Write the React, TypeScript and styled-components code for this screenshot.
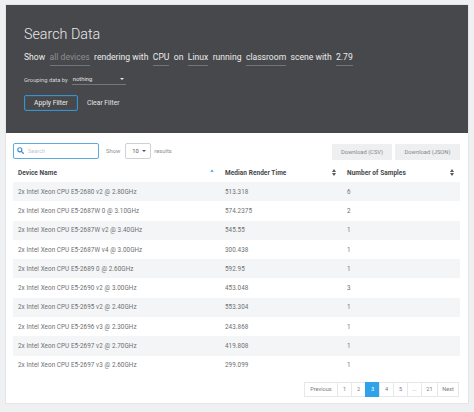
import React from "react";
import styled, { createGlobalStyle } from "styled-components";

const Global = createGlobalStyle`
  html, body { margin: 0; padding: 0; background: #eef0f2; }
  body { font-family: Roboto, "Liberation Sans", Arial, sans-serif; }
  * { box-sizing: border-box; }
`;

const Page = styled.div`
  padding: 4px 5px 10px 5px;
`;

const Card = styled.div`
  width: 464px;
  background: #ffffff;
  border: 1px solid #e3e5e8;
`;

const Header = styled.div`
  background: #47484b;
  padding: 19px 18px 20px 18px;
  height: 128px;
  display: flex;
  flex-direction: column;
`;

const Title = styled.h1`
  margin: 0;
  font-size: 14.3px;
  line-height: 20px;
  font-weight: 300;
  color: #e9e9ea;
`;

const Sentence = styled.div`
  margin-top: 7px;
  display: flex;
  align-items: flex-start;
  gap: 4.4px;
  font-size: 8.6px;
  line-height: 12px;
  color: #ececec;
`;

const Word = styled.span``;

const Pick = styled.span<{ $muted?: boolean }>`
  padding-bottom: 2px;
  border-bottom: 1px solid #74757a;
  color: ${(p) => (p.$muted ? "#8e8f93" : "#ececec")};
`;

const GroupRow = styled.div`
  margin-top: 7px;
  display: flex;
  align-items: flex-end;
  gap: 4px;
  font-size: 5.8px;
  color: #d6d6d8;
`;

const GroupLabel = styled.span`
  line-height: 10px;
`;

const GroupSelect = styled.div`
  width: 54px;
  height: 12px;
  display: flex;
  align-items: center;
  justify-content: space-between;
  padding: 0 2px 0 1px;
  border-bottom: 1px solid #76777b;
  color: #e4e4e4;
`;

const Caret = styled.span<{ $color?: string }>`
  width: 0;
  height: 0;
  border-left: 2px solid transparent;
  border-right: 2px solid transparent;
  border-top: 2.5px solid ${(p) => p.$color || "#e8e8e8"};
`;

const ButtonRow = styled.div`
  margin-top: 10px;
  display: flex;
  align-items: center;
  gap: 9px;
`;

const ApplyButton = styled.button`
  width: 54px;
  height: 16px;
  padding: 0;
  border: 1px solid #3f8fc8;
  box-shadow: inset 0 0 0 1px #3b5566;
  border-radius: 2px;
  background: transparent;
  color: #ececec;
  font-family: inherit;
  font-size: 6.8px;
`;

const ClearButton = styled.button`
  border: none;
  background: transparent;
  padding: 0;
  color: #e2e2e2;
  font-family: inherit;
  font-size: 6.8px;
`;

const Body = styled.div`
  padding: 9px 8px 6px 7px;
  display: flex;
  flex-direction: column;
`;

const Toolbar = styled.div`
  display: flex;
  align-items: center;
  height: 17px;
`;

const SearchBox = styled.div`
  width: 86px;
  height: 16px;
  border: 1px solid #5ea9dd;
  border-radius: 2px;
  display: flex;
  align-items: center;
  gap: 4px;
  padding-left: 3px;
  font-size: 5.6px;
  color: #c3c6c9;
`;

const ShowLabel = styled.span`
  margin-left: 7px;
  font-size: 5.8px;
  color: #8d8f92;
`;

const CountSelect = styled.div`
  margin-left: 5px;
  width: 26px;
  height: 16px;
  border: 1px solid #cfd2d5;
  border-radius: 2px;
  display: flex;
  align-items: center;
  justify-content: space-between;
  padding: 0 4px 0 6px;
  font-size: 5.8px;
  color: #555;
`;

const ResultsLabel = styled.span`
  margin-left: 3px;
  font-size: 5.8px;
  color: #8d8f92;
`;

const Spacer = styled.div`
  flex: 1;
`;

const DownloadButton = styled.button<{ $w: number }>`
  width: ${(p) => p.$w}px;
  height: 16px;
  margin-left: 3px;
  border: none;
  border-radius: 1px;
  background: #eeeff0;
  color: #85878a;
  font-family: inherit;
  font-size: 5.8px;
  padding: 0;
  margin-top: 2px;
`;

const Table = styled.div`
  margin-top: 4px;
  width: 447px;
  display: flex;
  flex-direction: column;
`;

const HeadRow = styled.div`
  display: grid;
  grid-template-columns: 207px 122px 118px;
  height: 19px;
  align-items: center;
`;

const HeadCell = styled.div`
  display: flex;
  align-items: center;
  justify-content: space-between;
  padding: 0 6px 0 5px;
  font-size: 6.5px;
  font-weight: 700;
  letter-spacing: 0.05px;
  color: #45474a;
`;

const Row = styled.div<{ $striped: boolean }>`
  display: grid;
  grid-template-columns: 207px 122px 118px;
  height: 19.3px;
  align-items: center;
  background: ${(p) => (p.$striped ? "#f4f5f6" : "#ffffff")};
`;

const Cell = styled.div`
  padding-left: 5px;
  font-size: 6.3px;
  letter-spacing: 0.08px;
  color: #6d6f72;
  white-space: nowrap;
`;

const Pager = styled.div`
  margin-top: 7px;
  align-self: flex-end;
  display: flex;
  height: 15px;
  margin-right: 1px;
`;

const PageButton = styled.div<{ $w: number; $active?: boolean }>`
  width: ${(p) => p.$w}px;
  height: 15px;
  display: flex;
  align-items: center;
  justify-content: center;
  border: 1px solid ${(p) => (p.$active ? "#2ea3ea" : "#e6e7e9")};
  margin-left: -1px;
  background: ${(p) => (p.$active ? "#2ea3ea" : "#ffffff")};
  color: ${(p) => (p.$active ? "#ffffff" : "#7c7e81")};
  font-size: 5.6px;
`;

const SortBoth = () => (
  <svg width="4" height="7" viewBox="0 0 4 7">
    <path d="M2 0 L4 3 L0 3 Z" fill="#55575a" />
    <path d="M2 7 L4 4 L0 4 Z" fill="#55575a" />
  </svg>
);

const SortUp = () => (
  <svg width="4" height="7" viewBox="0 0 4 7">
    <path d="M2 0.5 L3.8 2.8 L0.2 2.8 Z" fill="#3aa3e3" />
  </svg>
);

const SearchIcon = () => (
  <svg width="7" height="7" viewBox="0 0 10 10">
    <circle cx="4" cy="4" r="2.9" fill="none" stroke="#3f8fd0" strokeWidth="1.6" />
    <path d="M6.2 6.2 L9 9" stroke="#3f8fd0" strokeWidth="1.8" strokeLinecap="round" />
  </svg>
);

const rows: [string, string, string][] = [
  ["2x Intel Xeon CPU E5-2680 v2 @ 2.80GHz", "513.318", "6"],
  ["2x Intel Xeon CPU E5-2687W 0 @ 3.10GHz", "574.2375", "2"],
  ["2x Intel Xeon CPU E5-2687W v2 @ 3.40GHz", "545.55", "1"],
  ["2x Intel Xeon CPU E5-2687W v4 @ 3.00GHz", "300.438", "1"],
  ["2x Intel Xeon CPU E5-2689 0 @ 2.60GHz", "592.95", "1"],
  ["2x Intel Xeon CPU E5-2690 v2 @ 3.00GHz", "453.048", "3"],
  ["2x Intel Xeon CPU E5-2695 v2 @ 2.40GHz", "553.304", "1"],
  ["2x Intel Xeon CPU E5-2696 v3 @ 2.30GHz", "243.868", "1"],
  ["2x Intel Xeon CPU E5-2697 v2 @ 2.70GHz", "419.808", "1"],
  ["2x Intel Xeon CPU E5-2697 v3 @ 2.60GHz", "299.099", "1"],
];

const pages: { label: string; w: number; active?: boolean }[] = [
  { label: "Previous", w: 34 },
  { label: "1", w: 15 },
  { label: "2", w: 15 },
  { label: "3", w: 15, active: true },
  { label: "4", w: 15 },
  { label: "5", w: 15 },
  { label: "...", w: 15 },
  { label: "21", w: 17 },
  { label: "Next", w: 22 },
];

export default function App() {
  return (
    <>
      <Global />
      <Page>
        <Card>
          <Header>
            <Title>Search Data</Title>
            <Sentence>
              <Word>Show</Word>
              <Pick $muted>all devices</Pick>
              <Word>rendering with</Word>
              <Pick>CPU</Pick>
              <Word>on</Word>
              <Pick>Linux</Pick>
              <Word>running</Word>
              <Pick>classroom</Pick>
              <Word>scene with</Word>
              <Pick>2.79</Pick>
            </Sentence>
            <GroupRow>
              <GroupLabel>Grouping data by</GroupLabel>
              <GroupSelect>
                <span>nothing</span>
                <Caret />
              </GroupSelect>
            </GroupRow>
            <ButtonRow>
              <ApplyButton>Apply Filter</ApplyButton>
              <ClearButton>Clear Filter</ClearButton>
            </ButtonRow>
          </Header>
          <Body>
            <Toolbar>
              <SearchBox>
                <SearchIcon />
                <span>Search</span>
              </SearchBox>
              <ShowLabel>Show</ShowLabel>
              <CountSelect>
                <span>10</span>
                <Caret $color="#555" />
              </CountSelect>
              <ResultsLabel>results</ResultsLabel>
              <Spacer />
              <DownloadButton $w={60}>Download (CSV)</DownloadButton>
              <DownloadButton $w={65}>Download (JSON)</DownloadButton>
            </Toolbar>
            <Table>
              <HeadRow>
                <HeadCell>
                  <span>Device Name</span>
                  <SortUp />
                </HeadCell>
                <HeadCell>
                  <span>Median Render Time</span>
                  <SortBoth />
                </HeadCell>
                <HeadCell>
                  <span>Number of Samples</span>
                  <SortBoth />
                </HeadCell>
              </HeadRow>
              {rows.map((r, i) => (
                <Row key={r[0]} $striped={i % 2 === 0}>
                  <Cell>{r[0]}</Cell>
                  <Cell>{r[1]}</Cell>
                  <Cell>{r[2]}</Cell>
                </Row>
              ))}
            </Table>
            <Pager>
              {pages.map((p) => (
                <PageButton key={p.label} $w={p.w} $active={p.active}>
                  {p.label}
                </PageButton>
              ))}
            </Pager>
          </Body>
        </Card>
      </Page>
    </>
  );
}
